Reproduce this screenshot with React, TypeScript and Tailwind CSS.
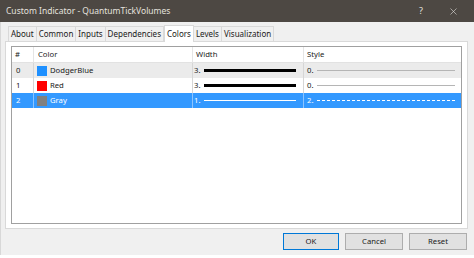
import { X } from 'lucide-react';

const tabs = ['About', 'Common', 'Inputs', 'Dependencies', 'Colors', 'Levels', 'Visualization'];

type Row = { id: number; color: string; swatch: string; width: number; style: number };

const rows: Row[] = [
  { id: 0, color: 'DodgerBlue', swatch: 'bg-[#1e90ff]', width: 3, style: 0 },
  { id: 1, color: 'Red', swatch: 'bg-[#ff0000]', width: 3, style: 0 },
  { id: 2, color: 'Gray', swatch: 'bg-[#808080]', width: 1, style: 2 },
];

export default function App() {
  const selected = 2;

  return (
    <div
      className="w-[474px] h-[258px] bg-white flex flex-col text-[7.7px] text-[#1a1a1a] overflow-hidden"
      style={{ fontFamily: '"Noto Sans", "Open Sans", sans-serif' }}
    >
      {/* Title bar */}
      <div className="h-[22px] bg-[#4d4843] flex items-center pl-[6px] text-[#e4e2df] text-[8.5px] shrink-0">
        <span className="flex-1">Custom Indicator - QuantumTickVolumes</span>
        <span className="w-[14px] text-center mr-[20px] text-[9px]">?</span>
        <X size={11} strokeWidth={1.3} className="mr-[15px]" />
      </div>

      <div className="h-[233px] bg-[#f0f0f0] flex flex-col pl-[4px] pr-[6px] border-l border-[#d8d8d8] shrink-0">
        {/* Tabs */}
        <div className="flex pl-[3px] pt-[4px] h-[19px] items-end shrink-0 text-[8px]">
          {tabs.map(t =>
            t === 'Colors' ? (
              <div
                key={t}
                className="h-[17px] px-[2px] bg-white border border-b-0 border-[#d9d9d9] -mb-px relative z-10 flex items-start pt-[1px] leading-[14px]"
              >
                {t}
              </div>
            ) : (
              <div
                key={t}
                className="h-[15px] px-[2px] bg-[#f0f0f0] border border-l-0 first:border-l border-b-0 border-[#d9d9d9] flex items-center leading-[14px]"
              >
                {t}
              </div>
            )
          )}
        </div>

        {/* Tab panel */}
        <div className="h-[188px] bg-white border border-[#d9d9d9] px-[5px] pt-[4px] shrink-0">
          <div className="h-[178px] border border-[#a0a0a0] bg-white">
            <div className="grid grid-cols-[22px_159px_111px_1fr] h-[16px] border-b border-[#e2e2e2] items-center">
              <div className="pl-[3px] h-full flex items-center border-r border-[#e5e5e5]">#</div>
              <div className="pl-[4px] h-full flex items-center border-r border-[#e5e5e5]">Color</div>
              <div className="pl-[3px] h-full flex items-center border-r border-[#e5e5e5]">Width</div>
              <div className="pl-[3px] h-full flex items-center">Style</div>
            </div>
            {rows.map(r => {
              const sel = r.id === selected;
              const bg = sel ? 'bg-[#3399ff] text-white' : r.id % 2 === 0 ? 'bg-[#ebebeb]' : 'bg-white';
              const sep = sel ? 'border-[#8cc4ff]' : 'border-[#d6d6d6]';
              return (
                <div key={r.id} className={`grid grid-cols-[22px_159px_111px_1fr] h-[15px] items-center ${bg}`}>
                  <div className={`pl-[4px] h-full flex items-center border-r ${sep}`}>{r.id}</div>
                  <div className={`pl-[3px] h-full flex items-center gap-[3px] border-r ${sep}`}>
                    <span className={`w-[10px] h-[10px] ${r.swatch}`} />
                    <span>{r.color}</span>
                  </div>
                  <div className={`pl-[1px] pr-[7px] h-full flex items-center gap-[5px] border-r ${sep}`}>
                    <span className="w-[5px]">{r.width}.</span>
                    <span
                      className={`flex-1 ${sel ? 'bg-white' : 'bg-black'}`}
                      style={{ height: r.width === 3 ? 3 : 1 }}
                    />
                  </div>
                  <div className="pl-[3px] pr-[6px] h-full flex items-center gap-[5px]">
                    <span className="w-[5px]">{r.style}.</span>
                    {r.style === 2 ? (
                      <span className="flex-1 border-t border-dashed border-white" />
                    ) : (
                      <span className="flex-1 h-px bg-[#b5b5b5]" />
                    )}
                  </div>
                </div>
              );
            })}
          </div>
        </div>

        {/* Buttons */}
        <div className="flex justify-end gap-[6px] pt-[4px] pr-[1px] shrink-0">
          <button className="w-[56px] h-[17px] bg-[#e1e1e1] border border-[#0078d7] text-[7.7px] leading-none">OK</button>
          <button className="w-[58px] h-[17px] bg-[#e1e1e1] border border-[#adadad] text-[7.7px] leading-none">Cancel</button>
          <button className="w-[58px] h-[17px] bg-[#e1e1e1] border border-[#adadad] text-[7.7px] leading-none">Reset</button>
        </div>
      </div>
    </div>
  );
}
